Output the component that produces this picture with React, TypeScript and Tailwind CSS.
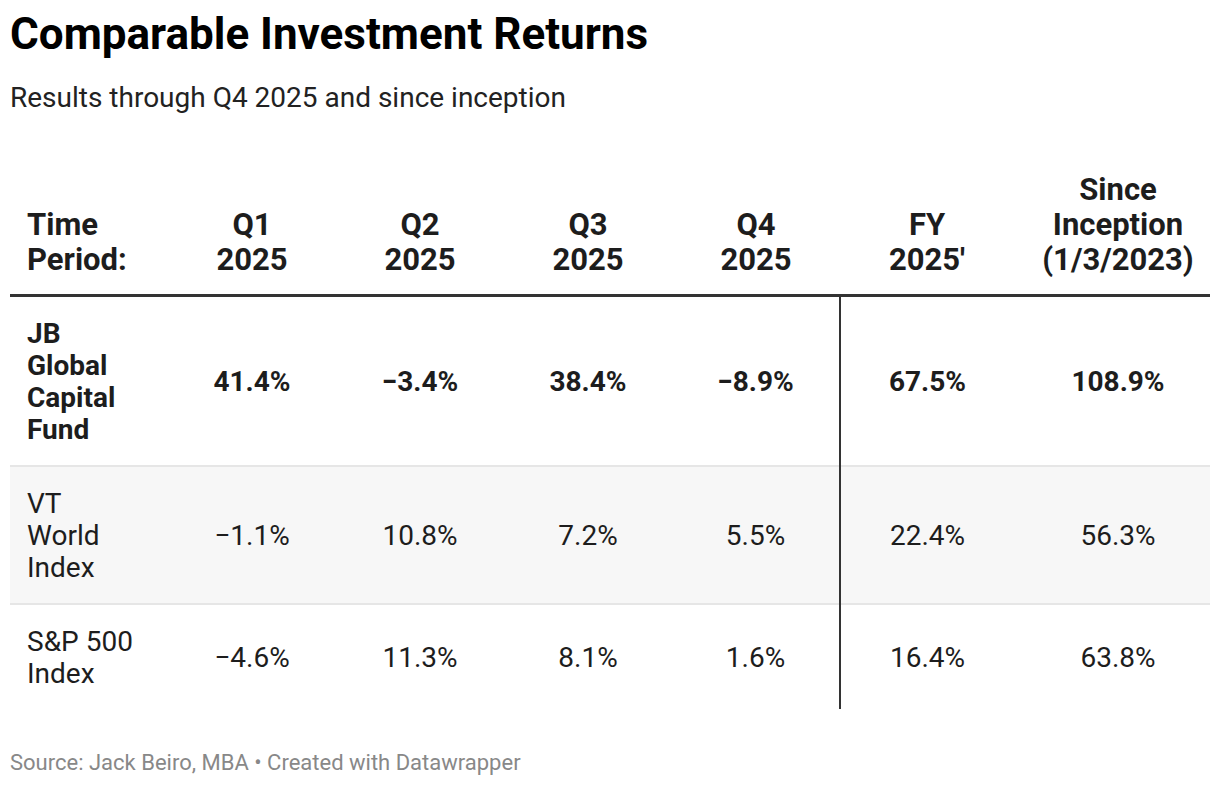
const COLS = ["Q1 2025", "Q2 2025", "Q3 2025", "Q4 2025"];

type Row = {
  name: string[];
  values: string[];
  bold?: boolean;
  shaded?: boolean;
};

const ROWS: Row[] = [
  {
    name: ["JB", "Global", "Capital", "Fund"],
    values: ["41.4%", "−3.4%", "38.4%", "−8.9%", "67.5%", "108.9%"],
    bold: true,
  },
  {
    name: ["VT", "World", "Index"],
    values: ["−1.1%", "10.8%", "7.2%", "5.5%", "22.4%", "56.3%"],
    shaded: true,
  },
  {
    name: ["S&P 500", "Index"],
    values: ["−4.6%", "11.3%", "8.1%", "1.6%", "16.4%", "63.8%"],
  },
];

export default function App() {
  return (
    <div
      className="w-[1220px] h-[786px] bg-white text-[#1d1d1d] px-[10px] pt-[8px] overflow-hidden"
      style={{ fontFamily: "Roboto, 'Liberation Sans', sans-serif" }}
    >
      <h1 className="text-[44px] leading-[52px] font-bold text-black">
        Comparable Investment Returns
      </h1>
      <p className="mt-[21px] text-[28px] leading-[34px] text-[#222]">
        Results through Q4 2025 and since inception
      </p>

      {/* Table */}
      <table className="mt-[57px] w-[1200px] table-fixed border-collapse">
        <colgroup>
          <col className="w-[158px]" />
          <col className="w-[168px]" />
          <col className="w-[168px]" />
          <col className="w-[168px]" />
          <col className="w-[168px]" />
          <col className="w-[174px]" />
          <col />
        </colgroup>
        <thead>
          <tr className="border-b-[3px] border-[#333]">
            <th className="pl-[17px] pb-[17px] align-bottom text-left text-[31px] leading-[35px] font-bold">
              Time
              <br />
              Period:
            </th>
            {COLS.map((c) => {
              const [q, y] = c.split(" ");
              return (
                <th
                  key={c}
                  className="pb-[17px] align-bottom text-center text-[31px] leading-[35px] font-bold"
                >
                  {q}
                  <br />
                  {y}
                </th>
              );
            })}
            <th className="pb-[17px] align-bottom text-center text-[31px] leading-[35px] font-bold">
              FY
              <br />
              2025'
            </th>
            <th className="pl-[12px] pb-[17px] align-bottom text-center text-[31px] leading-[35px] font-bold">
              Since
              <br />
              Inception
              <br />
              (1/3/2023)
            </th>
          </tr>
        </thead>
        <tbody>
          {ROWS.map((row, i) => (
            <tr
              key={i}
              className={`${row.shaded ? "bg-[#f7f7f7]" : ""} ${
                i < ROWS.length - 1 ? "border-b-2 border-[#e6e6e6]" : ""
              }`}
            >
              <td
                className={`pl-[17px] pt-[21px] pb-[19px] align-middle text-left text-[28px] leading-[32px] ${
                  row.bold ? "font-bold" : ""
                }`}
              >
                {row.name.map((n, k) => (
                  <div key={k}>{n}</div>
                ))}
              </td>
              {row.values.map((v, j) => (
                <td
                  key={j}
                  className={`pt-[21px] pb-[19px] align-middle text-center text-[28px] leading-[32px] ${
                    row.bold ? "font-bold" : ""
                  } ${j === 4 ? "border-l-2 border-l-[#333]" : ""} ${
                    j === 5 ? "pl-[12px]" : ""
                  }`}
                >
                  {v}
                </td>
              ))}
            </tr>
          ))}
        </tbody>
      </table>

      <p className="mt-[41px] text-[22px] leading-[26px] text-[#888]">
        Source: Jack Beiro, MBA • Created with Datawrapper
      </p>
    </div>
  );
}
